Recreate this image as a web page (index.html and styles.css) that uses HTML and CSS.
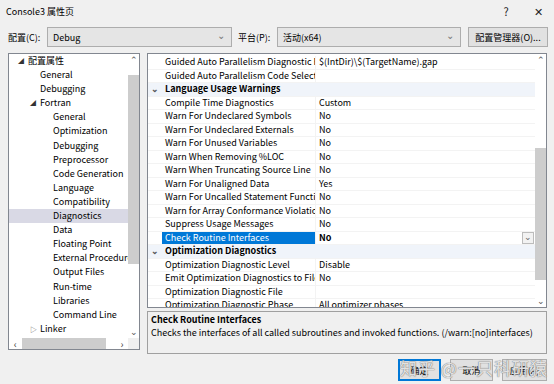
FILE: index.html
```html
<!doctype html>
<html lang="zh-CN">
  <head>
    <meta charset="UTF-8" />
    <title>Console3 属性页</title>
    <link rel="stylesheet" href="styles.css">
  </head>
  <body>
    <div class="dialog">
      <div class="titlebar">
        <span class="title">Console3 属性页</span>
        <span class="title-btn help">?</span>
        <span class="title-btn close">✕</span>
      </div>

      <div class="config-row">
        <label class="lbl">配置(C):</label>
        <div class="combo combo-config"><span>Debug</span><span class="chev">⌄</span></div>
        <label class="lbl lbl-platform">平台(P):</label>
        <div class="combo combo-platform"><span>活动(x64)</span><span class="chev">⌄</span></div>
        <div class="btn btn-manager">配置管理器(O)...</div>
      </div>

      <div class="main">
        <div class="tree">
          <div class="tree-body">
            <ul class="tree-list">
              <li class="lvl0"><span class="tw">◢</span>配置属性</li>
              <li class="lvl1">General</li>
              <li class="lvl1">Debugging</li>
              <li class="lvl1 has-tw"><span class="tw">◢</span>Fortran</li>
              <li class="lvl2">General</li>
              <li class="lvl2">Optimization</li>
              <li class="lvl2">Debugging</li>
              <li class="lvl2">Preprocessor</li>
              <li class="lvl2">Code Generation</li>
              <li class="lvl2">Language</li>
              <li class="lvl2">Compatibility</li>
              <li class="lvl2 selected">Diagnostics</li>
              <li class="lvl2">Data</li>
              <li class="lvl2">Floating Point</li>
              <li class="lvl2">External Procedures</li>
              <li class="lvl2">Output Files</li>
              <li class="lvl2">Run-time</li>
              <li class="lvl2">Libraries</li>
              <li class="lvl2">Command Line</li>
              <li class="lvl1 has-tw"><span class="tw closed">▷</span>Linker</li>
            </ul>
            <div class="vscroll tree-vscroll">
              <span class="arrow">⌃</span>
              <div class="track"><div class="thumb"></div></div>
              <span class="arrow">⌄</span>
            </div>
          </div>
          <div class="hscroll">
            <span class="arrow">‹</span>
            <div class="htrack"><div class="hthumb"></div></div>
            <span class="arrow">›</span>
            <span class="corner"></span>
          </div>
        </div>

        <div class="right">
          <div class="grid">
            <div class="grid-rows">
              <div class="row"><span class="gut"></span><span class="name">Guided Auto Parallelism Diagnostic File</span><span class="val">$(IntDir)\$(TargetName).gap</span></div>
              <div class="row"><span class="gut"></span><span class="name">Guided Auto Parallelism Code Selection</span><span class="val"></span></div>
              <div class="row cat"><span class="gut">⌄</span><span class="cat-name">Language Usage Warnings</span></div>
              <div class="row"><span class="gut"></span><span class="name">Compile Time Diagnostics</span><span class="val">Custom</span></div>
              <div class="row"><span class="gut"></span><span class="name">Warn For Undeclared Symbols</span><span class="val">No</span></div>
              <div class="row"><span class="gut"></span><span class="name">Warn For Undeclared Externals</span><span class="val">No</span></div>
              <div class="row"><span class="gut"></span><span class="name">Warn For Unused Variables</span><span class="val">No</span></div>
              <div class="row"><span class="gut"></span><span class="name">Warn When Removing %LOC</span><span class="val">No</span></div>
              <div class="row"><span class="gut"></span><span class="name">Warn When Truncating Source Line</span><span class="val">No</span></div>
              <div class="row"><span class="gut"></span><span class="name">Warn For Unaligned Data</span><span class="val">Yes</span></div>
              <div class="row"><span class="gut"></span><span class="name">Warn For Uncalled Statement Function</span><span class="val">No</span></div>
              <div class="row"><span class="gut"></span><span class="name">Warn for Array Conformance Violations</span><span class="val">No</span></div>
              <div class="row"><span class="gut"></span><span class="name">Suppress Usage Messages</span><span class="val">No</span></div>
              <div class="row active"><span class="gut"></span><span class="name">Check Routine Interfaces</span><span class="val"><b>No</b><span class="drop">⌄</span></span></div>
              <div class="row cat"><span class="gut">⌄</span><span class="cat-name">Optimization Diagnostics</span></div>
              <div class="row"><span class="gut"></span><span class="name">Optimization Diagnostic Level</span><span class="val">Disable</span></div>
              <div class="row"><span class="gut"></span><span class="name">Emit Optimization Diagnostics to File</span><span class="val">No</span></div>
              <div class="row"><span class="gut"></span><span class="name">Optimization Diagnostic File</span><span class="val"></span></div>
              <div class="row"><span class="gut"></span><span class="name">Optimization Diagnostic Phase</span><span class="val">All optimizer phases</span></div>
            </div>
            <div class="vscroll grid-vscroll">
              <span class="arrow">⌃</span>
              <div class="track"><div class="thumb"></div></div>
              <span class="arrow">⌄</span>
            </div>
          </div>

          <div class="desc">
            <div class="desc-title">Check Routine Interfaces</div>
            <div class="desc-text">Checks the interfaces of all called subroutines and invoked functions. (/warn:[no]interfaces)</div>
          </div>

          <div class="buttons">
            <div class="btn btn-ok">确定</div>
            <div class="btn">取消</div>
            <div class="btn">应用(A)</div>
          </div>
        </div>
      </div>

      <div class="watermark">知乎 @一只科研猿</div>
    </div>
  </body>
</html>
```

FILE: styles.css
```css
* {
  margin: 0;
  padding: 0;
  box-sizing: border-box;
}

body {
  font-family: "Noto Sans CJK SC", "Noto Sans", sans-serif;
  font-size: 9px;
  color: #000;
  background: #f0f0f0;
}

.dialog {
  position: relative;
  width: 554px;
  height: 384px;
  background: #f0f0f0;
  overflow: hidden;
}

.titlebar {
  height: 22px;
  display: flex;
  align-items: center;
  padding-left: 6px;
}

.title {
  flex: 1;
  font-size: 9px;
}

.title-btn {
  width: 32px;
  text-align: center;
  font-size: 11px;
  color: #222;
}

.config-row {
  display: flex;
  align-items: center;
  height: 20px;
  margin-top: 5px;
  padding-left: 8px;
  white-space: nowrap;
}

.lbl {
  width: 39px;
}

.lbl-platform {
  margin-left: 6px;
}

.combo {
  height: 20px;
  border: 1px solid #adadad;
  background: #e5e5e5;
  display: flex;
  align-items: center;
  justify-content: space-between;
  padding: 0 6px 0 5px;
}

.combo-config {
  width: 185px;
}

.combo-platform {
  width: 184px;
}

.chev {
  color: #777;
  font-size: 10px;
  line-height: 10px;
  margin-top: -4px;
}

.btn {
  height: 22px;
  width: 43px;
  border: 1px solid #adadad;
  background: #e1e1e1;
  display: flex;
  align-items: center;
  justify-content: center;
  white-space: nowrap;
}

.btn-manager {
  margin-left: 7px;
  width: 80px;
  height: 20px;
}

.main {
  display: flex;
  gap: 7px;
  margin-top: 6px;
  padding-left: 8px;
}

/* tree */
.tree {
  width: 132px;
  height: 297px;
  border: 1px solid #828790;
  background: #fff;
  display: flex;
  flex-direction: column;
}

.tree-body {
  flex: 1;
  display: flex;
  min-height: 0;
}

.tree-list {
  list-style: none;
  flex: 1;
  overflow: hidden;
}

.tree-list li {
  height: 14.1px;
  line-height: 14px;
  white-space: nowrap;
  overflow: hidden;
  padding-left: 31px;
}

.tree-list li.lvl0 {
  padding-left: 9px;
}

.tree-list li.lvl1.has-tw {
  padding-left: 21px;
}

.tree-list li.lvl2 {
  padding-left: 44px;
}

.tree-list li.selected {
  background: #d9d9e5;
}

.tw {
  display: inline-block;
  width: 10px;
  font-size: 6px;
  color: #333;
  vertical-align: top;
  line-height: 14px;
}

.tw.closed {
  color: #666;
  font-size: 7px;
}

.vscroll {
  width: 11px;
  display: flex;
  flex-direction: column;
  align-items: center;
  background: #fff;
}

.vscroll .arrow {
  height: 12px;
  font-size: 9px;
  line-height: 12px;
  color: #555;
}

.track {
  flex: 1;
  width: 100%;
  display: flex;
  flex-direction: column;
}

.thumb {
  background: #cdcdcd;
  width: 100%;
}

.tree-vscroll .track {
  padding-top: 9px;
  padding-bottom: 62px;
}

.tree-vscroll .thumb {
  flex: 1;
}

.hscroll {
  height: 11px;
  display: flex;
  align-items: center;
}

.hscroll .arrow {
  width: 13px;
  text-align: center;
  font-size: 10px;
  line-height: 11px;
  color: #444;
}

.htrack {
  flex: 1;
  height: 100%;
  padding-right: 10px;
}

.hthumb {
  height: 100%;
  width: 84px;
  background: #cdcdcd;
}

.corner {
  width: 11px;
  height: 11px;
  background: #f0f0f0;
}

/* property grid */
.right {
  width: 400px;
  display: flex;
  flex-direction: column;
}

.grid {
  height: 255px;
  border: 1px solid #828790;
  background: #fff;
  display: flex;
}

.grid-rows {
  flex: 1;
  overflow: hidden;
  padding-top: 2px;
}

.row {
  display: flex;
  height: 13.5px;
  line-height: 12.5px;
  border-bottom: 1px solid #f3f3f3;
  white-space: nowrap;
}

.gut {
  width: 14px;
  flex-shrink: 0;
  text-align: center;
  font-size: 9px;
  color: #555;
}

.name {
  width: 154px;
  flex-shrink: 0;
  overflow: hidden;
  padding-left: 3px;
  border-right: 1px solid #f3f3f3;
}

.val {
  flex: 1;
  padding-left: 3px;
  display: flex;
  justify-content: space-between;
  overflow: hidden;
}

.row.cat {
  background: #f0f4fa;
  font-weight: bold;
}

.cat-name {
  padding-left: 3px;
}

.row.active .name {
  background: #0078d7;
  color: #fff;
}

.drop {
  width: 12px;
  height: 12px;
  border: 1px solid #bcbcbc;
  background: #f2f2f2;
  color: #666;
  font-size: 9px;
  line-height: 8px;
  text-align: center;
  margin-right: 1px;
}

.grid-vscroll .track {
  padding-top: 82px;
  padding-bottom: 15px;
}

.grid-vscroll .thumb {
  flex: 1;
}

.desc {
  margin-top: 3px;
  height: 43px;
  border: 1px solid #a0a0a0;
  padding: 1px 3px;
  background: #f0f0f0;
}

.desc-title {
  font-weight: bold;
  line-height: 13px;
}

.desc-text {
  line-height: 14px;
  white-space: nowrap;
}

.buttons {
  display: flex;
  justify-content: flex-end;
  gap: 9px;
  margin-top: 5px;
}

.btn-ok {
  border: 2px solid #0078d7;
}

.buttons .btn:last-child {
  width: 45px;
}

.watermark {
  position: absolute;
  left: 400px;
  top: 355px;
  font-size: 17px;
  color: rgba(255, 255, 255, 0.8);
  text-shadow: 0 0 1px #777, 0 0 1px #777;
  letter-spacing: 1px;
  white-space: nowrap;
}
```
